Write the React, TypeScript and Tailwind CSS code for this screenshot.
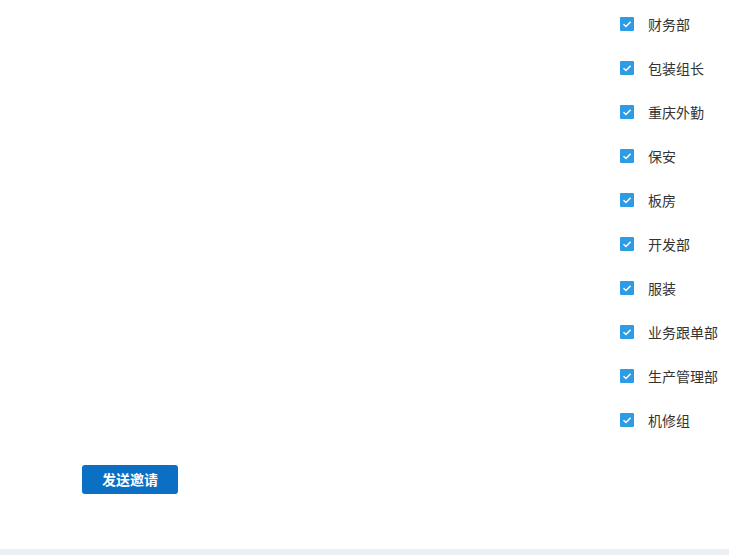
const groups = [
  "财务部",
  "包装组长",
  "重庆外勤",
  "保安",
  "板房",
  "开发部",
  "服装",
  "业务跟单部",
  "生产管理部",
  "机修组",
];

const CheckItem = ({ label }: { label: string }) => (
  <label className="flex h-[44px] items-center">
    <span className="flex h-[14px] w-[14px] items-center justify-center rounded-[1px] bg-[#2d9be5]">
      <svg viewBox="0 0 14 14" className="h-[14px] w-[14px]">
        <path d="M3.5 7.2 L6 9.5 L10.6 4.8" fill="none" stroke="#fff" strokeWidth="1.5" />
      </svg>
    </span>
    <span className="ml-[14px] whitespace-nowrap text-[14px] text-[#333]">{label}</span>
  </label>
);

export default function App() {
  return (
    <div
      className="flex h-[555px] w-[729px] flex-col overflow-hidden bg-white"
      style={{ fontFamily: '"Noto Sans CJK SC", "Liberation Sans", sans-serif' }}
    >
      <div className="flex flex-1 flex-col">
        <div className="flex flex-col pl-[620px] pt-[2px]">
          {groups.map((g) => (
            <CheckItem key={g} label={g} />
          ))}
        </div>
        <div className="pl-[82px] pt-[23px]">
          <button className="h-[29px] w-[96px] rounded-[3px] bg-[#0b70c3] text-[14px] font-bold text-white">
            发送邀请
          </button>
        </div>
      </div>
      <div className="h-[6px] bg-[#ebeef2]" />
    </div>
  );
}
